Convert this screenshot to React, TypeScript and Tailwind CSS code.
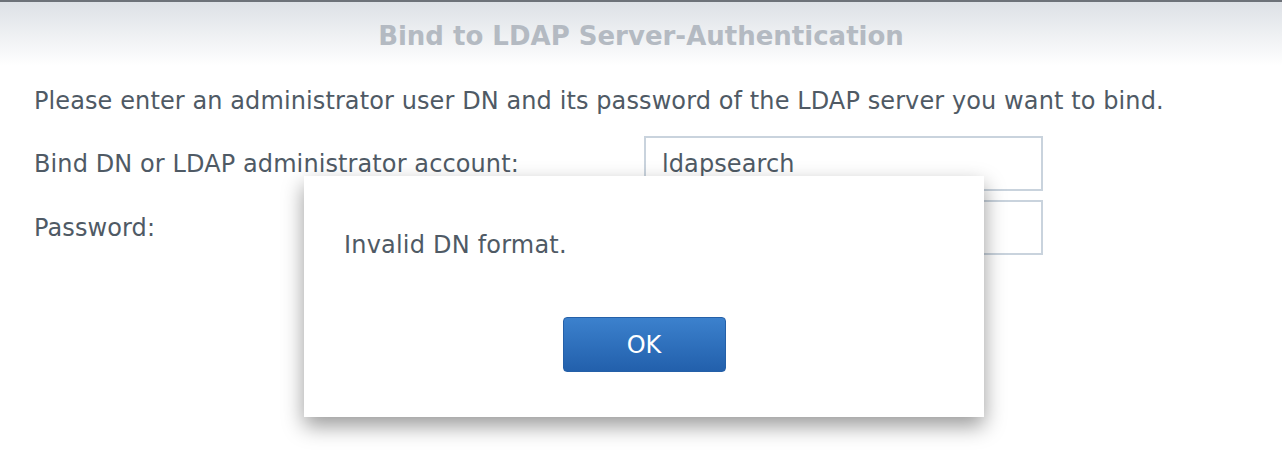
export default function App() {
  return (
    <div className="relative h-[460px] w-[1282px] overflow-hidden bg-white font-['DejaVu_Sans',sans-serif] text-[#4f5a65]">
      {/* header */}
      <div className="border-t-2 border-[#6d7279]">
        <div className="flex h-[64px] items-center justify-center bg-gradient-to-b from-[#dde1e6] to-white pt-[4px]">
          <h1 className="text-[26px] font-bold text-[#b4bac2]">Bind to LDAP Server-Authentication</h1>
        </div>
      </div>

      {/* form */}
      <div className="px-[34px] pt-[20px] text-[24px] tracking-[0.1px]">
        <p className="leading-[30px]">
          Please enter an administrator user DN and its password of the LDAP server you want to bind.
        </p>
        <div className="mt-[20px] flex flex-col gap-[9px]">
          <div className="flex items-center">
            <label className="w-[610px]">Bind DN or LDAP administrator account:</label>
            <div className="flex h-[55px] w-[399px] items-center border-2 border-[#c9d3dd] px-[16px]">ldapsearch</div>
          </div>
          <div className="flex items-center">
            <label className="w-[610px]">Password:</label>
            <div className="h-[55px] w-[399px] border-2 border-[#c9d3dd]"></div>
          </div>
        </div>
      </div>

      {/* message box */}
      <div className="absolute left-[304px] top-[176px] flex h-[241px] w-[680px] flex-col bg-white shadow-[0_9px_20px_rgba(0,0,0,0.4)]">
        <p className="pl-[40px] pt-[54px] text-[24px] leading-[30px] tracking-[0.2px]">Invalid DN format.</p>
        <div className="mt-[57px] flex justify-center">
          <button className="h-[55px] w-[163px] rounded-[4px] border border-[#2560a8] bg-gradient-to-b from-[#3c81cd] to-[#2260ac] text-[24px] text-white">
            OK
          </button>
        </div>
      </div>
    </div>
  );
}
